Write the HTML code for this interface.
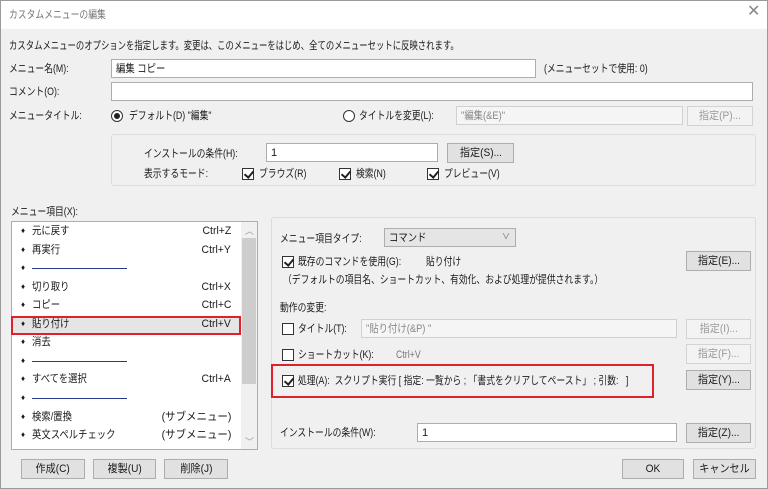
<!DOCTYPE html>
<html><head><meta charset="utf-8"><style>
*{box-sizing:border-box;margin:0;padding:0}
body{width:768px;height:489px;background:#f0f0f0;font-family:"Liberation Sans","Noto Sans CJK JP",sans-serif;font-size:11px;color:#1a1a1a;position:relative;overflow:hidden;border:1px solid #9a9a9a}
.a{position:absolute;white-space:nowrap;line-height:14px;transform:scaleX(.8);transform-origin:left center}
.in{position:absolute;background:#fff;border:1px solid #adadad;height:19px;padding:2px 4px;line-height:14px;white-space:nowrap}
.in s{text-decoration:none;display:inline-block;transform:scaleX(.85);transform-origin:left}
.dis{background:#f5f5f5;border-color:#d0d0d0;color:#888}
.btn{position:absolute;background:#e1e1e1;border:1px solid #adadad;height:20px;text-align:center;line-height:18px;white-space:nowrap}
.btn s{text-decoration:none;display:inline-block;transform:scaleX(.92)}
.bd{background:#f3f3f3;border-color:#d3d3d3;color:#999}
.cb{position:absolute;width:12px;height:12px;border:1px solid #333;background:#fff}
.cb.on::after{content:"";position:absolute;left:3px;top:0px;width:4px;height:7px;border:solid #222;border-width:0 2px 2px 0;transform:rotate(40deg)}
.grp{position:absolute;border:1px solid #dcdcdc;border-radius:3px}
.li{position:absolute;left:20px;width:220px;height:18px;line-height:18px;white-space:nowrap}
.li b{position:absolute;left:0;font-weight:normal;font-size:8px}
.li span{position:absolute;left:11px;transform:scaleX(.85);transform-origin:left}
.li i{position:absolute;right:10px;font-style:normal;transform:scaleX(.95);transform-origin:right}
.sep{position:absolute;left:11px;top:9px;width:95px;border-top:1px solid #2a3a8a}
</style></head><body>
<div style="position:absolute;left:0;top:0;width:766px;height:28px;background:#fff"></div>
<div class="a" style="left:8px;top:7px;color:#777">カスタムメニューの編集</div>
<div class="a" style="left:746px;top:4px;font-size:16px;color:#888;transform:none">✕</div>
<div class="a" style="left:8px;top:38px;transform:scaleX(.76)">カスタムメニューのオプションを指定します。変更は、このメニューをはじめ、全てのメニューセットに反映されます。</div>
<div class="a" style="left:8px;top:61px">メニュー名(M):</div>
<div class="in" style="left:110px;top:58px;width:425px"><s>編集 コピー</s></div>
<div class="a" style="left:543px;top:61px">(メニューセットで使用: 0)</div>
<div class="a" style="left:8px;top:84px">コメント(O):</div>
<div class="in" style="left:110px;top:81px;width:642px"></div>
<div class="a" style="left:8px;top:108px">メニュータイトル:</div>
<div style="position:absolute;left:110px;top:109px;width:12px;height:12px;border:1px solid #333;border-radius:50%;background:#fff"><div style="position:absolute;left:2px;top:2px;width:6px;height:6px;border-radius:50%;background:#222"></div></div>
<div class="a" style="left:128px;top:108px">デフォルト(D) "編集"</div>
<div style="position:absolute;left:342px;top:109px;width:12px;height:12px;border:1px solid #333;border-radius:50%;background:#fff"></div>
<div class="a" style="left:358px;top:108px">タイトルを変更(L):</div>
<div class="in dis" style="left:455px;top:105px;width:227px"><s>"編集(&amp;E)"</s></div>
<div class="btn bd" style="left:686px;top:105px;width:66px"><s>指定(P)...</s></div>
<div class="grp" style="left:110px;top:133px;width:645px;height:52px"></div>
<div class="a" style="left:143px;top:146px">インストールの条件(H):</div>
<div class="in" style="left:265px;top:142px;width:172px">1</div>
<div class="btn" style="left:446px;top:142px;width:67px"><s>指定(S)...</s></div>
<div class="a" style="left:143px;top:166px">表示するモード:</div>
<div class="cb on" style="left:241px;top:167px"></div><div class="a" style="left:258px;top:166px">ブラウズ(R)</div>
<div class="cb on" style="left:338px;top:167px"></div><div class="a" style="left:355px;top:166px">検索(N)</div>
<div class="cb on" style="left:426px;top:167px"></div><div class="a" style="left:443px;top:166px">プレビュー(V)</div>

<div class="a" style="left:10px;top:204px">メニュー項目(X):</div>
<div style="position:absolute;left:10px;top:220px;width:247px;height:229px;background:#fff;border:1px solid #adadad"></div>
<div style="position:absolute;left:240px;top:221px;width:16px;height:227px;background:#f0f0f0"></div>
<div style="position:absolute;left:241px;top:237px;width:14px;height:146px;background:#cdcdcd"></div>
<div class="a" style="left:244px;top:223px;color:#999;font-size:9px;transform:none">︿</div>
<div class="a" style="left:244px;top:434px;color:#999;font-size:9px;transform:none">﹀</div>
<div class="li" style="top:221px"><b>♦</b><span>元に戻す</span><i>Ctrl+Z</i></div>
<div class="li" style="top:240px"><b>♦</b><span>再実行</span><i>Ctrl+Y</i></div>
<div class="li" style="top:258px"><b>♦</b><div class="sep"></div></div>
<div class="li" style="top:277px"><b>♦</b><span>切り取り</span><i>Ctrl+X</i></div>
<div class="li" style="top:295px"><b>♦</b><span>コピー</span><i>Ctrl+C</i></div>
<div style="position:absolute;left:11px;top:316px;width:228px;height:17px;background:#e5e5e5"></div>
<div class="li" style="top:314px"><b>♦</b><span>貼り付け</span><i>Ctrl+V</i></div>
<div style="position:absolute;left:10px;top:315px;width:230px;height:19px;border:2px solid #e0202a"></div>
<div class="li" style="top:332px"><b>♦</b><span>消去</span></div>
<div class="li" style="top:351px"><b>♦</b><div class="sep"></div></div>
<div class="li" style="top:369px"><b>♦</b><span>すべてを選択</span><i>Ctrl+A</i></div>
<div class="li" style="top:388px"><b>♦</b><div class="sep"></div></div>
<div class="li" style="top:407px"><b>♦</b><span>検索/置換</span><i>(サブメニュー)</i></div>
<div class="li" style="top:425px"><b>♦</b><span>英文スペルチェック</span><i>(サブメニュー)</i></div>

<div class="grp" style="left:270px;top:216px;width:485px;height:232px"></div>
<div class="a" style="left:279px;top:231px">メニュー項目タイプ:</div>
<div class="in" style="left:383px;top:227px;width:132px;background:#e5e5e5"><s>コマンド</s><span style="position:absolute;right:5px;top:1px;font-size:8px;color:#666">∨</span></div>
<div class="cb on" style="left:281px;top:255px"></div><div class="a" style="left:297px;top:254px">既存のコマンドを使用(G):</div>
<div class="a" style="left:425px;top:254px">貼り付け</div>
<div class="btn" style="left:685px;top:250px;width:65px"><s>指定(E)...</s></div>
<div class="a" style="left:282px;top:272px">（デフォルトの項目名、ショートカット、有効化、および処理が提供されます。）</div>
<div class="a" style="left:279px;top:300px">動作の変更:</div>
<div class="cb" style="left:281px;top:322px"></div><div class="a" style="left:297px;top:321px">タイトル(T):</div>
<div class="in dis" style="left:360px;top:318px;width:316px"><s>"貼り付け(&amp;P) "</s></div>
<div class="btn bd" style="left:685px;top:318px;width:65px"><s>指定(I)...</s></div>
<div class="cb" style="left:281px;top:348px"></div><div class="a" style="left:297px;top:347px">ショートカット(K):</div>
<div class="a" style="left:395px;top:347px;color:#777">Ctrl+V</div>
<div class="btn bd" style="left:685px;top:343px;width:65px"><s>指定(F)...</s></div>
<div class="cb on" style="left:281px;top:374px"></div><div class="a" style="left:297px;top:373px">処理(A):&nbsp; スクリプト実行 [ 指定: 一覧から ; 「書式をクリアしてペースト」 ; 引数: &nbsp; ]</div>
<div style="position:absolute;left:270px;top:363px;width:383px;height:34px;border:2px solid #e0202a"></div>
<div class="btn" style="left:685px;top:369px;width:65px"><s>指定(Y)...</s></div>
<div class="a" style="left:279px;top:425px">インストールの条件(W):</div>
<div class="in" style="left:416px;top:422px;width:260px">1</div>
<div class="btn" style="left:685px;top:422px;width:65px"><s>指定(Z)...</s></div>

<div class="btn" style="left:20px;top:458px;width:64px"><s>作成(C)</s></div>
<div class="btn" style="left:92px;top:458px;width:63px"><s>複製(U)</s></div>
<div class="btn" style="left:163px;top:458px;width:64px"><s>削除(J)</s></div>
<div class="btn" style="left:621px;top:458px;width:62px"><s>OK</s></div>
<div class="btn" style="left:692px;top:458px;width:63px"><s>キャンセル</s></div>
</body></html>
